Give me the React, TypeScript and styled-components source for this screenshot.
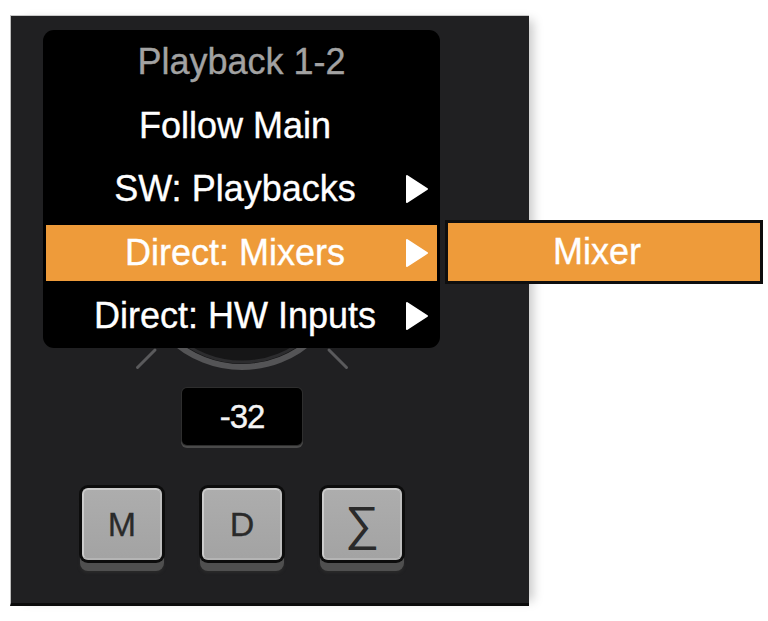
import React from 'react';
import styled, { createGlobalStyle } from 'styled-components';

const GlobalStyle = createGlobalStyle`
  html, body {
    margin: 0;
    padding: 0;
    background: #ffffff;
  }
  body {
    font-family: "Liberation Sans", Arial, sans-serif;
    overflow: hidden;
  }
`

const Page = styled.div`
  width: 768px;
  height: 621px;
  padding: 15px 0 0 10px;
  box-sizing: border-box;
`

const Panel = styled.div`
  width: 519px;
  height: 591px;
  box-sizing: border-box;
  background: #202022;
  border-top: 1px solid #c8c8c8;
  border-left: 1px solid #bdbdbd;
  border-bottom: 3px solid #0b0b0b;
  box-shadow: 9px 0 10px -5px rgba(0, 0, 0, 0.22);
`

const Strip = styled.div`
  position: relative;
  width: 462px;
  display: flex;
  flex-direction: column;
  align-items: center;
`

const KnobSvg = styled.svg`
  display: block;
  width: 320px;
  height: 360px;
`

const ValueBox = styled.div`
  margin-top: 12px;
  width: 120px;
  height: 57px;
  box-sizing: border-box;
  background: #000;
  border-radius: 5px;
  box-shadow: 0 0 0 1px #2e2e2e, 0 2px 0 1px #4a4a4a;
  color: #f4f4f4;
  font-size: 33px;
  letter-spacing: -1px;
  -webkit-text-stroke: 0.4px currentColor;
  display: flex;
  align-items: center;
  justify-content: center;
`

const ButtonRow = styled.div`
  margin-top: 43px;
  display: flex;
  gap: 40px;
`

const KeyButton = styled.button<{ $symbol?: boolean }>`
  width: 80px;
  height: 72px;
  box-sizing: border-box;
  padding: 0;
  border: 2px solid #cbcbcb;
  border-right-color: #bcbcbc;
  border-bottom-color: #b4b4b4;
  border-radius: 6px;
  background: linear-gradient(#adadad, #a3a3a3);
  box-shadow: 0 0 0 3px #0c0c0c, 0 9px 0 2px #4f4f4f, 0 11px 3px 2px #2a2a2a;
  color: #2a2a2a;
  font-family: "Liberation Sans", Arial, sans-serif;
  font-size: ${p => (p.$symbol ? '48px' : '34px')};
  -webkit-text-stroke: ${p => (p.$symbol ? '0' : '0.3px')} currentColor;
  line-height: 1;
  display: flex;
  align-items: center;
  justify-content: center;
`

const Menu = styled.div`
  position: absolute;
  top: 14px;
  left: 32px;
  width: 397px;
  box-sizing: border-box;
  padding: 4px 3px;
  background: #000;
  border-radius: 11px;
  display: flex;
  flex-direction: column;
  gap: 7.5px;
`

const MenuRow = styled.div<{ $active?: boolean; $title?: boolean }>`
  position: relative;
  height: 56px;
  display: grid;
  align-items: center;
  background: ${p => (p.$active ? '#ee9b3a' : 'transparent')};
  color: ${p => (p.$title ? '#a2a2a2' : '#ffffff')};
  font-size: 36px;
  line-height: 56px;
  -webkit-text-stroke: 0.35px currentColor;
  white-space: nowrap;

  & > * {
    grid-area: 1 / 1;
  }
`

const RowLabel = styled.span<{ $title?: boolean }>`
  text-align: center;
  padding-right: ${p => (p.$title ? '0' : '13px')};
`

const Arrow = styled.svg`
  justify-self: end;
  margin-right: 8px;
  width: 24px;
  height: 30px;
`

const Submenu = styled.div`
  position: absolute;
  top: -4.5px;
  left: calc(100% + 8px);
  width: 318px;
  height: 63.5px;
  box-sizing: border-box;
  border: 3px solid #0e0e0e;
  background: #ee9b3a;
  color: #fff;
  font-size: 36px;
  display: flex;
  align-items: center;
  justify-content: center;
  padding-right: 14px;
`

function SubArrow() {
  return (
    <Arrow viewBox="0 0 24 30">
      <path d="M2 2 L22 15 L2 28 Z" fill="#fff" stroke="#fff" strokeWidth="2" strokeLinejoin="round" />
    </Arrow>
  )
}

function Knob() {
  return (
    <KnobSvg viewBox="0 0 320 360">
      <circle cx="160" cy="247" r="104" fill="#161617" stroke="#545456" strokeWidth="6" />
      <circle cx="160" cy="247" r="99" fill="none" stroke="#2c2c2e" strokeWidth="3" />
      <line x1="73" y1="334" x2="55.5" y2="351.5" stroke="#5a5a5c" strokeWidth="3" strokeLinecap="round" />
      <line x1="247" y1="334" x2="264.5" y2="351.5" stroke="#5a5a5c" strokeWidth="3" strokeLinecap="round" />
    </KnobSvg>
  )
}

const items = [
  { label: 'Follow Main', sub: false },
  { label: 'SW: Playbacks', sub: true },
  { label: 'Direct: Mixers', sub: true, active: true },
  { label: 'Direct: HW Inputs', sub: true },
]

function App() {
  return <Page>
    <GlobalStyle />
    <Panel>
      <Strip>
        <Knob />
        <ValueBox>-32</ValueBox>
        <ButtonRow>
          <KeyButton>M</KeyButton>
          <KeyButton>D</KeyButton>
          <KeyButton $symbol>∑</KeyButton>
        </ButtonRow>

        <Menu>
          <MenuRow $title>
            <RowLabel $title>Playback 1-2</RowLabel>
          </MenuRow>
          {items.map((item, index: number) => {
            return <MenuRow key={index} $active={item.active}>
              <RowLabel>{item.label}</RowLabel>
              {item.sub && <SubArrow />}
              {item.active && <Submenu>Mixer</Submenu>}
            </MenuRow>
          })}
        </Menu>
      </Strip>
    </Panel>
  </Page>
}

export default App;
